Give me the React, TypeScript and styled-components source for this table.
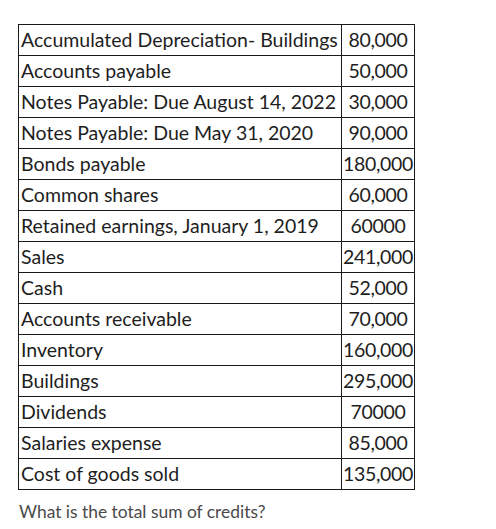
import styled, { createGlobalStyle } from "styled-components";

const GlobalStyle = createGlobalStyle`
  html, body {
    margin: 0;
    padding: 0;
    background: #fff;
  }
  body {
    font-family: Lato, "Liberation Sans", sans-serif;
  }
`;

const Page = styled.div`
  padding: 24px 0 0 18px;
  width: 496px;
  height: 529px;
  box-sizing: border-box;
`;

const Table = styled.table`
  border-collapse: collapse;
  table-layout: fixed;
  width: 397px;
  color: #1e1e1e;
  font-size: 19.5px;
`;

const Row = styled.tr`
  height: 31px;
`;

const Label = styled.td`
  width: 320px;
  border: 1px solid #1a1a1a;
  padding: 0 0 1px 2px;
  text-align: left;
  white-space: nowrap;
  line-height: 1;
`;

const Amount = styled.td`
  border: 1px solid #1a1a1a;
  padding: 0 0 1px;
  text-align: center;
  white-space: nowrap;
  line-height: 1;
  letter-spacing: -0.3px;
`;

const Question = styled.p`
  margin: 11px 0 0 1px;
  font-size: 17.4px;
  color: #4a4a4a;
`;

const rows: [string, string][] = [
  ["Accumulated Depreciation- Buildings", "80,000"],
  ["Accounts payable", "50,000"],
  ["Notes Payable: Due August 14, 2022", "30,000"],
  ["Notes Payable: Due May 31, 2020", "90,000"],
  ["Bonds payable", "180,000"],
  ["Common shares", "60,000"],
  ["Retained earnings, January 1, 2019", "60000"],
  ["Sales", "241,000"],
  ["Cash", "52,000"],
  ["Accounts receivable", "70,000"],
  ["Inventory", "160,000"],
  ["Buildings", "295,000"],
  ["Dividends", "70000"],
  ["Salaries expense", "85,000"],
  ["Cost of goods sold", "135,000"],
];

export default function App() {
  return (
    <>
      <GlobalStyle />
      <Page>
        <Table>
          <tbody>
            {rows.map(([name, value]) => (
              <Row key={name}>
                <Label>{name}</Label>
                <Amount>{value}</Amount>
              </Row>
            ))}
          </tbody>
        </Table>
        <Question>What is the total sum of credits?</Question>
      </Page>
    </>
  );
}
